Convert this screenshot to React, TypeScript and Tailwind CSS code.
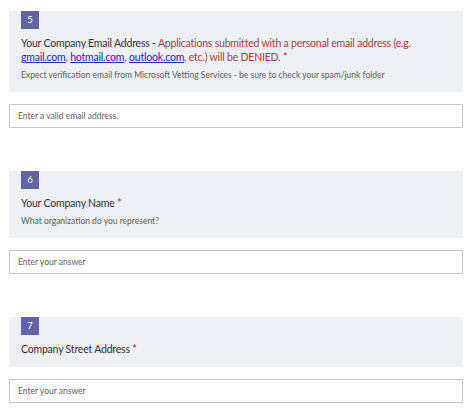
const font = { fontFamily: 'Lato, "Noto Sans", sans-serif' };

type Question = {
  num: number;
  title: React.ReactNode;
  desc?: string;
  placeholder: string;
};

const Asterisk = () => <span className="text-[#a4262c]"> *</span>;

const questions: Question[] = [
  {
    num: 5,
    title: (
      <>
        Your Company Email Address -{" "}
        <span className="text-[#a8403f]">
          Applications submitted with a personal email address (e.g.
          <br />
          <a className="text-[#1c2bb0] underline" href="#">
            gmail.com
          </a>
          ,{" "}
          <a className="text-[#1c2bb0] underline" href="#">
            hotmail.com
          </a>
          ,{" "}
          <a className="text-[#1c2bb0] underline" href="#">
            outlook.com
          </a>
          , etc.) will be DENIED.
        </span>
        <Asterisk />
      </>
    ),
    desc: "Expect verification email from Microsoft Vetting Services - be sure to check your spam/junk folder",
    placeholder: "Enter a valid email address.",
  },
  {
    num: 6,
    title: (
      <>
        Your Company Name
        <Asterisk />
      </>
    ),
    desc: "What organization do you represent?",
    placeholder: "Enter your answer",
  },
  {
    num: 7,
    title: (
      <>
        Company Street Address
        <Asterisk />
      </>
    ),
    placeholder: "Enter your answer",
  },
];

const QuestionBlock = ({ q }: { q: Question }) => (
  <div className="flex flex-col">
    <div className="bg-[#efeff6] pl-3 pr-2 pb-[11px]">
      <div className="w-[18px] h-[18px] bg-[#6264a7] text-white text-[9.5px] flex items-center justify-center">
        {q.num}
      </div>
      <div className="mt-[7px] text-[10.5px] leading-[14px] tracking-[-0.2px] text-[#333333]">{q.title}</div>
      {q.desc && (
        <div className="mt-[5px] text-[8.5px] leading-[12px] text-[#605e5c]">{q.desc}</div>
      )}
    </div>
    <input
      className="mt-3 h-6 w-full border border-[#c8c6c4] bg-white px-2 text-[8.5px] text-[#323130] placeholder:text-[#605e5c] outline-none"
      placeholder={q.placeholder}
      style={font}
    />
  </div>
);

export default function App() {
  return (
    <div className="w-[474px] h-[415px] bg-white overflow-hidden" style={font}>
      <div className="ml-[9px] mr-[11px] pt-[11px] flex flex-col gap-[43px]">
        {questions.map((q) => (
          <QuestionBlock key={q.num} q={q} />
        ))}
      </div>
    </div>
  );
}
